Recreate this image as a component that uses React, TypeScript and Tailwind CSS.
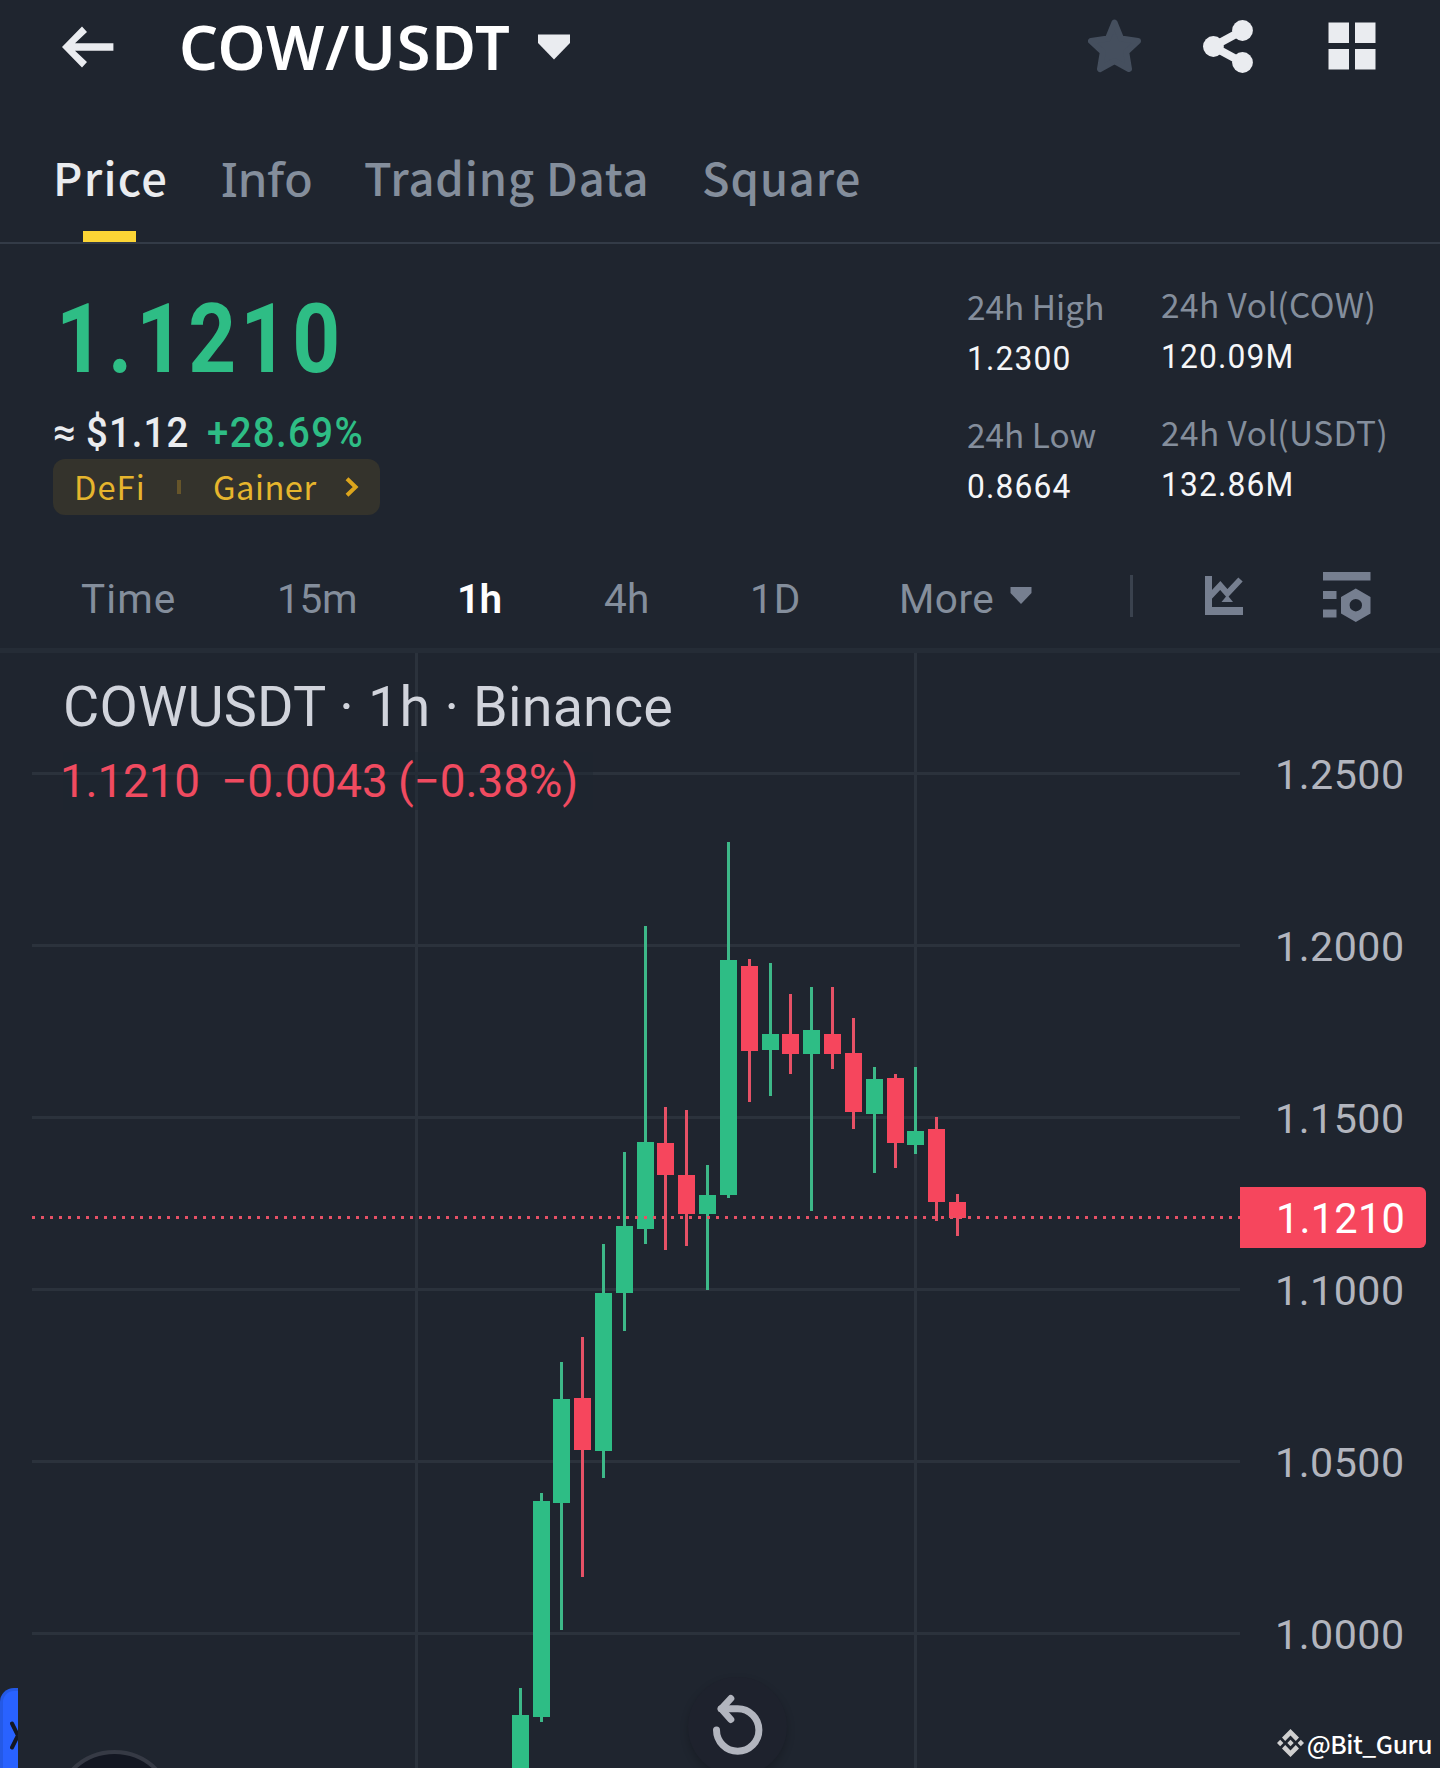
import { clsx } from "clsx";

type Candle = { x: number; high: number; top: number; bottom: number; low: number; up: boolean };

const tabs = [
  { label: "Price", className: "w-[168px] pt-[24px] font-['Noto_Sans_CJK_SC'] text-[45.3px] tracking-[1.3px]", active: true },
  { label: "Info", className: "w-[143px] pt-[30px] font-['Noto_Sans'] text-[47.3px] tracking-[-0.1px]" },
  { label: "Trading Data", className: "w-[338px] pt-[24px] font-['Noto_Sans_CJK_SC'] text-[45.3px] tracking-[0.9px]" },
  { label: "Square", className: "pt-[24px] font-['Noto_Sans_CJK_SC'] text-[45.3px] tracking-[0.9px]" },
];

const statColumns = [
  {
    className: "w-[194px] pt-[40px]",
    stats: [
      { label: "24h High", value: "1.2300" },
      { label: "24h Low", value: "0.8664" },
    ],
  },
  {
    className: "pt-[38px] tracking-[0.45px]",
    stats: [
      { label: "24h Vol(COW)", value: "120.09M" },
      { label: "24h Vol(USDT)", value: "132.86M" },
    ],
  },
];

const intervals = [
  { label: "Time", className: "w-[196px] tracking-[1.1px]" },
  { label: "15m", className: "w-[180px] tracking-[-0.3px]" },
  { label: "1h", className: "w-[147px] font-semibold text-white tracking-[-0.7px]" },
  { label: "4h", className: "w-[146px] tracking-[0.2px]" },
  { label: "1D", className: "w-[149px] tracking-[0.9px]" },
  { label: "More", className: "w-[111px] tracking-[0.5px]" },
];

const priceTicks = ["1.2500", "1.2000", "1.1500", "1.1000", "1.0500", "1.0000"];
const gridRows = [773.5, 945.5, 1117.5, 1289.5, 1461.5, 1633.5];
const gridCols = [416.5, 915.5];

const candles: Candle[] = [
  { x: 512, high: 1688, top: 1715, bottom: 1790, low: 1790, up: true },
  { x: 533, high: 1493, top: 1501, bottom: 1717, low: 1722, up: true },
  { x: 553, high: 1362, top: 1399, bottom: 1503, low: 1630, up: true },
  { x: 574, high: 1337, top: 1398, bottom: 1450, low: 1577, up: false },
  { x: 595, high: 1244, top: 1293, bottom: 1451, low: 1478, up: true },
  { x: 616, high: 1152, top: 1226, bottom: 1293, low: 1331, up: true },
  { x: 637, high: 926, top: 1142, bottom: 1229, low: 1244, up: true },
  { x: 657, high: 1107, top: 1143, bottom: 1175, low: 1250, up: false },
  { x: 678, high: 1110, top: 1175, bottom: 1214, low: 1246, up: false },
  { x: 699, high: 1165, top: 1195, bottom: 1214, low: 1290, up: true },
  { x: 720, high: 842, top: 960, bottom: 1195, low: 1198, up: true },
  { x: 741, high: 959, top: 966, bottom: 1051, low: 1102, up: false },
  { x: 762, high: 963, top: 1034, bottom: 1050, low: 1096, up: true },
  { x: 782, high: 994, top: 1034, bottom: 1054, low: 1074, up: false },
  { x: 803, high: 987, top: 1030, bottom: 1054, low: 1211, up: true },
  { x: 824, high: 987, top: 1034, bottom: 1054, low: 1069, up: false },
  { x: 845, high: 1018, top: 1053, bottom: 1112, low: 1129, up: false },
  { x: 866, high: 1067, top: 1079, bottom: 1114, low: 1173, up: true },
  { x: 887, high: 1074, top: 1078, bottom: 1143, low: 1168, up: false },
  { x: 907, high: 1067, top: 1131, bottom: 1145, low: 1154, up: true },
  { x: 928, high: 1117, top: 1129, bottom: 1202, low: 1221, up: false },
  { x: 949, high: 1194, top: 1202, bottom: 1218, low: 1236, up: false },
];

function Header() {
  return (
    <header className="flex h-24 items-center pl-[62px] pr-16 text-[#eaecf0]">
      <svg className="mb-[3px]" width="52" height="42" viewBox="0 0 52 42" fill="currentColor">
        <path d="M0 21 20 0.5 25 6 13 17.3H51.4V24.7H13L25 36 20 41.5Z" />
      </svg>
      <h1 className="ml-[65px] w-[359px] whitespace-nowrap pb-0.5 font-['Noto_Sans'] text-[61.2px] leading-[64px] font-semibold tracking-[0.8px] text-white">
        COW/USDT
      </h1>
      <svg className="mb-[3px]" width="32" height="26" viewBox="0 0 32 26" fill="currentColor">
        <path d="M0 0.5H32V9L16 25.5 0 9Z" />
      </svg>
      <svg
        className="mb-[5px] ml-auto text-[#454f5e]"
        width="54"
        height="54"
        viewBox="0 0 54 54"
        fill="currentColor"
        stroke="currentColor"
        strokeWidth="6"
        strokeLinejoin="round"
      >
        <path d="M26.5 3.5 33 19.5 50 22 38.2 33 41 50 26.5 42 12 50 14.8 33 3 22 20 19.5Z" />
      </svg>
      <svg className="mb-[3px] ml-[61px]" width="50" height="53" viewBox="0 0 50 53" fill="currentColor">
        <path d="M39.5 10.5 10 26.5 39.5 42.5" fill="none" stroke="currentColor" strokeWidth="8" />
        <circle cx="39.5" cy="10.5" r="10.4" />
        <circle cx="10.4" cy="26.5" r="10.4" />
        <circle cx="39.5" cy="42.5" r="10.4" />
      </svg>
      <svg className="mb-[4px] ml-[75px]" width="48" height="48" viewBox="0 0 48 48" fill="currentColor">
        <path d="M0.5 0.5H21V21H0.5ZM27 0.5H47.5V21H27ZM0.5 27H21V47.5H0.5ZM27 27H47.5V47.5H27Z" />
      </svg>
    </header>
  );
}

function Tabs() {
  return (
    <nav className="flex h-[148px] border-b-2 border-[#333b47] pl-[53px] font-medium">
      {tabs.map((tab) => (
        <div key={tab.label} className="flex flex-col">
          <span
            className={clsx(
              "flex h-[135px] items-center whitespace-nowrap leading-[60px]",
              tab.className,
              tab.active ? "text-[#eaecef]" : "text-[#848e9c]",
            )}
          >
            {tab.label}
          </span>
          {tab.active && <span className="ml-[30px] h-[11px] w-[53px] bg-[#fcd535]" />}
        </div>
      ))}
    </nav>
  );
}

function PriceSummary() {
  return (
    <section className="flex h-[304px] justify-between">
      <div className="flex flex-col pl-[53px] pt-[47px]">
        <div className="ml-[3px] w-[327px] origin-left scale-x-[0.87] font-['Roboto'] text-[96px] leading-[96px] font-bold tracking-[4.7px] text-[#2ebd85]">
          1.1210
        </div>
        <div className="mt-5 flex h-[52px] items-center whitespace-nowrap font-['Roboto'] text-[41.7px] leading-[52px] font-medium">
          <span className="w-[33px] text-[40px] text-[#eaecef]">≈</span>
          <span className="w-[121px] origin-left scale-x-[0.92] tracking-[1.2px] text-[#eaecef]">$1.12</span>
          <span className="w-[160px] origin-left scale-x-[0.92] tracking-[1.5px] text-[#2ebd85]">+28.69%</span>
        </div>
        <div className="flex h-14 w-[327px] items-center rounded-xl bg-[#34332c] pl-[21px] font-['Noto_Sans_CJK_SC'] text-[32.7px] leading-[50px] text-[#e6b52d]">
          <span className="w-[103px] pb-[3px] tracking-[1px]">DeFi</span>
          <span className="h-[14px] w-1 bg-[#66552a]" />
          <span className="ml-8 w-[132px] pb-[3px] tracking-[0.5px]">Gainer</span>
          <svg width="14" height="20" viewBox="0 0 14 20" fill="none" stroke="#dca51c" strokeWidth="4">
            <path d="M2 1.8 10.6 10 2 18.2" />
          </svg>
        </div>
      </div>
      <div className="flex w-[473px]">
        {statColumns.map((column) => (
          <div key={column.className} className={clsx("flex flex-col gap-[31px]", column.className)}>
            {column.stats.map((stat) => (
              <div key={stat.label} className="flex flex-col gap-[9px] whitespace-nowrap leading-[44px]">
                <span className="font-['Noto_Sans_CJK_SC'] text-[33.4px] text-[#848e9c]">{stat.label}</span>
                <span className="origin-left scale-x-[0.94] font-['Roboto'] text-[33.8px] tracking-[1.2px] text-[#f5f6f8]">
                  {stat.value}
                </span>
              </div>
            ))}
          </div>
        ))}
      </div>
    </section>
  );
}

function IntervalBar() {
  return (
    <div className="flex h-[100px] items-center pl-[81px] font-['Roboto'] text-[40.5px] leading-[50px] text-[#848e9c]">
      {intervals.map((interval) => (
        <span key={interval.label} className={clsx("pt-0.5", interval.className)}>
          {interval.label}
        </span>
      ))}
      <svg className="mb-[6px]" width="22" height="17" viewBox="0 0 22 17" fill="#767f90">
        <path d="M0.5 0H21.5V6L11 17 0.5 6Z" />
      </svg>
      <span className="mb-1 ml-[98px] h-[42px] w-[3px] bg-[#3a424e]" />
      <svg className="mb-[5px] ml-[72px]" width="38" height="39" viewBox="0 0 38 39" fill="#767f90">
        <path d="M0 0H7V31H38V39H0Z" />
        <path d="M4 21.5 15.3 9.5 22.3 17.5 35.5 3.5" fill="none" stroke="#767f90" strokeWidth="6" />
        <path d="M22.3 19 28 26H16.5Z" />
      </svg>
      <svg className="mb-[2px] ml-20" width="48" height="50" viewBox="0 0 48 50" fill="#767f90">
        <path d="M0 0H47.5V8.5H0ZM0 19H13.5V27H0ZM0 37.5H13.5V45.5H0Z" />
        <path
          fillRule="evenodd"
          d="M32.8 16.5 47.5 25V41.5L32.8 50 18 41.5V25ZM32.8 27A6.2 6.2 0 1 0 32.8 39.4 6.2 6.2 0 1 0 32.8 27Z"
        />
      </svg>
    </div>
  );
}

function CandleChart() {
  return (
    <svg className="block" width="1240" height="1115" viewBox="0 653 1240 1115" shapeRendering="crispEdges">
      {gridRows.map((y) => (
        <rect key={y} x="32" y={y - 1.5} width="1208" height="3" fill="#2b323c" />
      ))}
      {gridCols.map((x) => (
        <rect key={x} x={x - 1.5} y="653" width="3" height="1115" fill="#2b323c" />
      ))}
      {candles.map((c) => (
        <g key={c.x}>
          <rect x={c.x + 7} y={c.high} width="3" height={c.low - c.high} fill={c.up ? "#3db888" : "#e65166"} />
          <rect x={c.x} y={c.top} width="17" height={c.bottom - c.top} fill={c.up ? "#2ebd85" : "#f6465d"} />
        </g>
      ))}
      <path d="M32 1217.5H1240" stroke="#e65166" strokeWidth="3" strokeDasharray="3 6" />
    </svg>
  );
}

function ChartLegend() {
  return (
    <div className="absolute left-[63px] top-[24px] whitespace-nowrap font-['Roboto']">
      <div className="text-[55.7px] leading-[60px] tracking-[0.18px] text-[#d1d4dc]">COWUSDT · 1h · Binance</div>
      <div className="mt-[15px] flex w-[530px] bg-[#1f252f]/40 text-[45.9px] leading-[58px] text-[#f04b60]">
        <span className="-ml-[3px] w-[161px] tracking-[-0.2px]">1.1210</span>
        <span className="w-[177px] tracking-[-0.1px]">−0.0043</span>
        <span className="tracking-[-0.1px]">(−0.38%)</span>
      </div>
    </div>
  );
}

function Chart() {
  return (
    <main className="relative flex grow overflow-hidden border-t-[5px] border-[#252c36]">
      <CandleChart />
      <div className="flex grow flex-col pl-[35px] pt-[37px] font-['Roboto'] text-[41.2px] tracking-[0.5px] text-[#b2b5be]">
        {priceTicks.map((tick) => (
          <span key={tick} className="flex h-[172px] shrink-0 items-center">
            {tick}
          </span>
        ))}
      </div>

      <ChartLegend />

      {/* last price */}
      <div className="absolute left-[1240px] top-[534px] flex h-[61px] w-[186px] items-center rounded-r-md bg-[#f6465d] pl-[36px] pt-[3px] font-['Roboto'] text-[41.6px] tracking-[0.2px] text-white">
        1.1210
      </div>

      {/* side handle */}
      <div className="absolute left-0 top-[1035px] h-24 w-[18px] overflow-hidden rounded-tl-[14px] border-l-[3px] border-t-[3px] border-[#2459e6] bg-[#2962ff]">
        <svg className="ml-[7px] mt-[30px]" width="12" height="30" viewBox="0 0 12 30" fill="none" stroke="#131722" strokeWidth="4">
          <path d="M2 2.5 8 14.5 2 26.5" strokeLinecap="round" />
        </svg>
      </div>

      <div className="absolute left-[54px] top-[1097px] size-[121px] rounded-full border-4 border-[#363a45] bg-[#131722]" />

      {/* reset view */}
      <div className="absolute left-[688px] top-[1024px] size-[99px] rounded-full bg-[#1e222d] shadow-[0_4px_8px_rgba(0,0,0,0.2)]">
        <svg
          width="99"
          height="99"
          viewBox="688 1677 99 99"
          fill="none"
          stroke="#b2b5be"
          strokeWidth="7"
          strokeLinecap="round"
          strokeLinejoin="round"
        >
          <path d="M716.5 1730A21.2 21.2 0 1 0 737.7 1708.8H721" />
          <path d="M730.8 1698.5 721.3 1708.8 730.8 1719.5" />
        </svg>
      </div>

      <div className="absolute bottom-[9px] right-[8px] flex items-center whitespace-nowrap font-['Noto_Sans_CJK_SC'] text-[24.7px] leading-8 font-medium tracking-[-0.45px] text-white">
        <svg className="mr-[3px]" width="27" height="28" viewBox="0 0 27 28" fill="#d0d0d0">
          <path d="M13.5 0 22 8.6 18.8 11.9 13.5 6.6 8.2 11.9 5 8.6ZM13.5 28 22 19.4 18.8 16.1 13.5 21.4 8.2 16.1 5 19.4Z" />
          <path d="M13.5 10.7 16.7 14 13.5 17.3 10.3 14ZM3.2 10.7 6.4 14 3.2 17.3 0 14ZM23.8 10.7 27 14 23.8 17.3 20.6 14Z" />
        </svg>
        @Bit_Guru
      </div>
    </main>
  );
}

export default function App() {
  return (
    <div className="flex h-[1768px] w-[1440px] flex-col overflow-hidden bg-[#1f252f]">
      <Header />
      <Tabs />
      <PriceSummary />
      <IntervalBar />
      <Chart />
    </div>
  );
}
